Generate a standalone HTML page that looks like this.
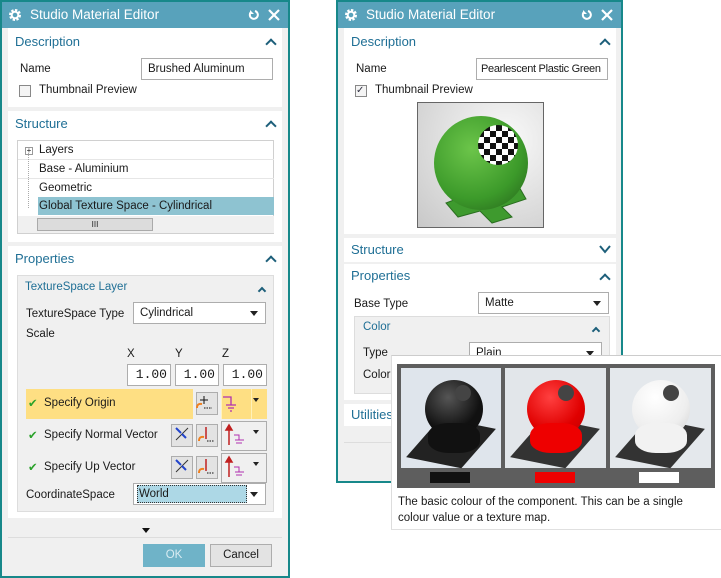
<!DOCTYPE html>
<html><head><meta charset="utf-8"><style>
*{box-sizing:border-box;margin:0;padding:0}
body{width:721px;height:578px;background:#fff;position:relative;overflow:hidden;font-family:"Liberation Sans","DejaVu Sans",sans-serif;font-size:11.5px;color:#1a1a1a}
.a{position:absolute}
.win{position:absolute;background:#f0f0f0;border:2px solid #17888a}
.title{position:absolute;left:0;top:0;right:0;height:26px;background:#58a2bb;color:#fff;font-size:13.5px;line-height:26px;padding-left:28px}
.sec{position:absolute;background:#fff}
.h{position:absolute;color:#1f6f95;font-size:13px}
.car{position:absolute;width:8px;height:8px;border-left:2px solid #1d5f7a;border-top:2px solid #1d5f7a;transform:rotate(45deg)}
.inp{position:absolute;background:#fff;border:1px solid #adadad;padding-left:6px;line-height:20px;height:22px}
.dd:after{content:"";position:absolute;right:7px;top:8px;border:4px solid transparent;border-top:5px solid #222;border-bottom:0}
.btn{position:absolute;background:#e3e3e3;border:1px solid #adadad}
.num{font-family:'Liberation Mono',monospace;font-size:13px;text-align:right;padding-right:3px}
</style></head><body>

<!-- LEFT WINDOW -->
<div class="win" style="left:0;top:0;width:290px;height:578px">
 <div class="title">Studio Material Editor
  <svg class="a" style="left:6px;top:6px" width="14" height="14" viewBox="0 0 14 14"><circle cx="7" cy="7" r="4.5" fill="none" stroke="#fff" stroke-width="3" stroke-dasharray="2.2 1.3"/><circle cx="7" cy="7" r="3.3" fill="none" stroke="#fff" stroke-width="2"/></svg>
  <svg class="a" style="left:246px;top:7px" width="12" height="12" viewBox="0 0 12 12"><path d="M3 3A4 4 0 1 0 7 2" fill="none" stroke="#fff" stroke-width="2"/><path d="M2 1v4h4" fill="#fff"/></svg>
  <svg class="a" style="left:266px;top:7px" width="12" height="12" viewBox="0 0 12 12"><path d="M1 1L11 11M11 1L1 11" stroke="#fff" stroke-width="2.2"/></svg>
 </div>
 <div class="sec" style="left:6px;top:26px;width:274px;height:79px">
  <div class="h" style="left:7px;top:6px">Description</div><div class="car" style="left:259px;top:12px"></div>
  <div class="a" style="left:12px;top:35px">Name</div>
  <div class="inp" style="left:133px;top:30px;width:132px">Brushed Aluminum</div>
  <div class="a" style="left:11px;top:57px;width:12px;height:12px;border:1px solid #888;background:#f4f4f4"></div>
  <div class="a" style="left:31px;top:56px">Thumbnail Preview</div>
 </div>
 <div class="sec" style="left:6px;top:109px;width:274px;height:131px">
  <div class="h" style="left:7px;top:5px">Structure</div><div class="car" style="left:259px;top:11px"></div>
  <div class="a" style="left:9px;top:29px;width:257px;height:94px;border:1px solid #d0d0d0;background:#fff">
   <div class="a" style="left:7px;top:6px;width:8px;height:8px;border:1px solid #999;font-size:8px;line-height:6px;text-align:center">+</div>
   <div class="a" style="left:21px;top:3px">Layers</div>
   <div class="a" style="left:0;top:18px;width:256px;border-top:1px solid #e6e6e6"></div>
   <div class="a" style="left:21px;top:22px">Base - Aluminium</div>
   <div class="a" style="left:0;top:37px;width:256px;border-top:1px solid #e6e6e6"></div>
   <div class="a" style="left:21px;top:41px">Geometric</div>
   <div class="a" style="left:20px;top:56px;width:236px;height:18px;background:#8ec3d1"></div>
   <div class="a" style="left:21px;top:59px">Global Texture Space - Cylindrical</div>
   <div class="a" style="left:10px;top:12px;height:55px;border-left:1px dotted #aaa"></div>
   <div class="a" style="left:0;top:75px;width:256px;height:17px;background:#f0f0f0"></div>
   <div class="a" style="left:19px;top:77px;width:116px;height:13px;background:#dcdcdc;border:1px solid #aaa;font-size:8px;text-align:center;line-height:11px">III</div>
  </div>
 </div>
 <div class="sec" style="left:6px;top:244px;width:274px;height:272px">
  <div class="h" style="left:7px;top:5px">Properties</div><div class="car" style="left:259px;top:11px"></div>
  <div class="a" style="left:9px;top:29px;width:257px;height:237px;background:#f0f0f0;border:1px solid #ddd">
   <div class="h" style="left:7px;top:5px;font-size:11.5px">TextureSpace Layer</div><div class="car" style="left:241px;top:12px;width:6px;height:6px"></div>
   <div class="a" style="left:8px;top:32px">TextureSpace Type</div>
   <div class="inp dd" style="left:115px;top:26px;width:133px">Cylindrical</div>
   <div class="a" style="left:8px;top:52px">Scale</div>
   <div class="a" style="left:109px;top:72px">X</div><div class="a" style="left:157px;top:72px">Y</div><div class="a" style="left:204px;top:72px">Z</div>
   <div class="inp num" style="left:109px;top:88px;width:44px">1.00</div>
   <div class="inp num" style="left:157px;top:88px;width:44px">1.00</div>
   <div class="inp num" style="left:205px;top:88px;width:44px">1.00</div>
   <div class="a" style="left:8px;top:113px;width:167px;height:30px;background:#fedf83"></div>
   <div class="a" style="left:203px;top:113px;width:46px;height:30px;background:#fedf83;border-left:1px solid #fff3c0"></div>
   <div class="a" style="left:233px;top:113px;width:1px;height:30px;background:#fff1b8"></div>
   <div class="a" style="left:10px;top:120px;color:#2aa22a;font-weight:bold">✔</div><div class="a" style="left:26px;top:121px">Specify Origin</div>
   <div class="btn" style="left:178px;top:116px;width:22px;height:23px"></div>
   <div class="a" style="left:10px;top:152px;color:#2aa22a;font-weight:bold">✔</div><div class="a" style="left:26px;top:153px">Specify Normal Vector</div>
   <div class="btn" style="left:153px;top:148px;width:22px;height:23px"></div><div class="btn" style="left:178px;top:148px;width:22px;height:23px"></div>
   <div class="btn" style="left:203px;top:145px;width:46px;height:30px;background:#f0f0f0"></div>
   <div class="a" style="left:10px;top:184px;color:#2aa22a;font-weight:bold">✔</div><div class="a" style="left:26px;top:185px">Specify Up Vector</div>
   <div class="btn" style="left:153px;top:180px;width:22px;height:23px"></div><div class="btn" style="left:178px;top:180px;width:22px;height:23px"></div>
   <div class="btn" style="left:203px;top:177px;width:46px;height:30px;background:#f0f0f0"></div>
   <div class="a" style="left:8px;top:213px">CoordinateSpace</div>
   <div class="inp dd" style="left:115px;top:207px;width:133px;padding-left:3px"><span style="display:inline-block;background:#add8e6;width:110px;line-height:16px;border:1px dotted #333;padding-left:1px">World</span></div>
  </div>
 </div>
 <div class="a" style="left:140px;top:526px;border:4px solid transparent;border-top:5px solid #111"></div>
 <div class="a" style="left:6px;top:535px;width:274px;border-top:1px solid #ddd"></div>
 <div class="a" style="left:141px;top:542px;width:62px;height:23px;background:#6fb3c8;color:#d9ecf2;text-align:center;line-height:23px">OK</div>
 <div class="btn" style="left:208px;top:542px;width:62px;height:23px;text-align:center;line-height:21px">Cancel</div>
</div>
<!-- left icons -->
<svg class="a" style="left:194px;top:392px" width="22" height="20"><path d="M10 4v8M6 8h8" stroke="#111"/><path d="M3 16q0-5 5-4" stroke="#f08020" stroke-width="2" fill="none"/><path d="M10 16h8" stroke="#111" stroke-dasharray="1.5 1"/></svg>
<svg class="a" style="left:220px;top:392px" width="20" height="20"><path d="M3 5h8v8M6 13h10M8 16h6M10 19h2" stroke="#b030b0" stroke-width="1.3" fill="none"/></svg>
<svg class="a" style="left:172px;top:424px" width="20" height="20"><path d="M4 16L16 4" stroke="#333"/><path d="M4 4l5 5M10 10l4 4" stroke="#2244cc" stroke-width="2"/></svg>
<svg class="a" style="left:172px;top:456px" width="20" height="20"><path d="M4 16L16 4" stroke="#333"/><path d="M4 4l5 5M10 10l4 4" stroke="#2244cc" stroke-width="2"/></svg>
<svg class="a" style="left:196px;top:424px" width="20" height="20"><path d="M10 3v12" stroke="#c02020" stroke-width="1.5"/><path d="M3 17q0-5 5-4" stroke="#f08020" stroke-width="2" fill="none"/><path d="M11 17h7" stroke="#111" stroke-dasharray="1.5 1"/></svg>
<svg class="a" style="left:196px;top:456px" width="20" height="20"><path d="M10 3v12" stroke="#c02020" stroke-width="1.5"/><path d="M3 17q0-5 5-4" stroke="#f08020" stroke-width="2" fill="none"/><path d="M11 17h7" stroke="#111" stroke-dasharray="1.5 1"/></svg>
<svg class="a" style="left:222px;top:422px" width="24" height="26"><path d="M7 3l-3 5h6zM7 7v16" stroke="#c02020" fill="#c02020" stroke-width="1.5"/><path d="M12 13h5v5M13 18h9M14 21h6" stroke="#b030b0" fill="none"/></svg>
<svg class="a" style="left:222px;top:454px" width="24" height="26"><path d="M7 3l-3 5h6zM7 7v16" stroke="#c02020" fill="#c02020" stroke-width="1.5"/><path d="M12 13h5v5M13 18h9M14 21h6" stroke="#b030b0" fill="none"/></svg>
<div class="a" style="left:253px;top:398px;border:3px solid transparent;border-top:4px solid #222"></div>
<div class="a" style="left:253px;top:430px;border:3px solid transparent;border-top:4px solid #222"></div>
<div class="a" style="left:253px;top:462px;border:3px solid transparent;border-top:4px solid #222"></div>

<!-- RIGHT WINDOW -->
<div class="win" style="left:336px;top:0;width:287px;height:483px">
 <div class="title">Studio Material Editor
  <svg class="a" style="left:6px;top:6px" width="14" height="14" viewBox="0 0 14 14"><circle cx="7" cy="7" r="4.5" fill="none" stroke="#fff" stroke-width="3" stroke-dasharray="2.2 1.3"/><circle cx="7" cy="7" r="3.3" fill="none" stroke="#fff" stroke-width="2"/></svg>
  <svg class="a" style="left:243px;top:7px" width="12" height="12" viewBox="0 0 12 12"><path d="M3 3A4 4 0 1 0 7 2" fill="none" stroke="#fff" stroke-width="2"/><path d="M2 1v4h4" fill="#fff"/></svg>
  <svg class="a" style="left:263px;top:7px" width="12" height="12" viewBox="0 0 12 12"><path d="M1 1L11 11M11 1L1 11" stroke="#fff" stroke-width="2.2"/></svg>
 </div>
 <div class="sec" style="left:6px;top:26px;width:272px;height:206px">
  <div class="h" style="left:7px;top:6px">Description</div><div class="car" style="left:257px;top:12px"></div>
  <div class="a" style="left:12px;top:35px">Name</div>
  <div class="inp" style="left:132px;top:30px;width:132px;padding-left:4px;white-space:nowrap;overflow:hidden;letter-spacing:-0.3px;font-size:11px">Pearlescent Plastic Green</div>
  <div class="a" style="left:11px;top:57px;width:12px;height:12px;border:1px solid #888;background:#f4f4f4;font-size:10px;line-height:10px;color:#334">✓</div>
  <div class="a" style="left:31px;top:56px">Thumbnail Preview</div>
  <div class="a" style="left:73px;top:74px;width:127px;height:126px;border:1px solid #666;background:radial-gradient(circle at 70% 30%,#fafafa,#c8c8c8);overflow:hidden">
   <svg class="a" style="left:0;top:0" width="125" height="124"><path d="M30 88l30-12 40 6 8 14-24 8 10 10-20 6-12-12-22 6-12-14 16-6z" fill="#3e9a2e" stroke="#2a6e20"/></svg>
   <div class="a" style="left:16px;top:13px;width:94px;height:94px;border-radius:50%;background:radial-gradient(circle at 40% 35%,#6cc54a,#3c9a2a 60%,#245e1a)"></div>
   <div class="a" style="left:60px;top:22px;width:40px;height:40px;border-radius:50%;overflow:hidden;background:repeating-conic-gradient(#111 0 25%,#fff 0 50%) 0 0/12px 12px"></div>
  </div>
 </div>
 <div class="sec" style="left:6px;top:236px;width:272px;height:24px">
  <div class="h" style="left:7px;top:4px">Structure</div>
  <svg class="a" style="left:255px;top:7px" width="12" height="9"><path d="M1 1l5 6 5-6" stroke="#1d5f7a" stroke-width="2" fill="none"/></svg>
 </div>
 <div class="sec" style="left:6px;top:262px;width:272px;height:136px">
  <div class="h" style="left:7px;top:4px">Properties</div><div class="car" style="left:257px;top:11px"></div>
  <div class="a" style="left:10px;top:34px">Base Type</div>
  <div class="inp dd" style="left:134px;top:28px;width:131px">Matte</div>
  <div class="a" style="left:10px;top:52px;width:256px;height:78px;background:#f0f0f0;border:1px solid #ddd">
   <div class="h" style="left:8px;top:4px;font-size:11.5px">Color</div><div class="car" style="left:238px;top:11px;width:6px;height:6px"></div>
   <div class="a" style="left:8px;top:30px">Type</div>
   <div class="inp dd" style="left:114px;top:25px;width:133px">Plain</div>
   <div class="a" style="left:8px;top:52px">Color</div>
  </div>
 </div>
 <div class="sec" style="left:6px;top:402px;width:272px;height:22px">
  <div class="h" style="left:7px;top:3px">Utilities</div>
 </div>
 <div class="a" style="left:6px;top:440px;width:272px;border-top:1px solid #ddd"></div>
</div>

<!-- TOOLTIP -->
<div class="a" style="left:391px;top:355px;width:330px;height:175px;background:#fff;border-top:1px solid #ccc;border-left:1px solid #ddd;border-bottom:1px solid #e0e0e0">
 <div class="a" style="left:5px;top:8px;width:318px;height:124px;background:#5e5e5e">
  <div class="a" style="left:4px;top:4px;width:100px;height:100px;background:#dfe5ec">
   <div class="a" style="left:18px;top:55px;width:64px;height:40px;background:#222;transform:skewX(-35deg) rotate(10deg)"></div>
   <div class="a" style="left:24px;top:12px;width:58px;height:58px;border-radius:50%;background:radial-gradient(circle at 40% 30%,#555,#111 60%)"></div>
   <div class="a" style="left:27px;top:55px;width:52px;height:30px;border-radius:40%;background:#111"></div>
   <div class="a" style="left:54px;top:17px;width:16px;height:16px;border-radius:50%;background:#444"></div>
  </div>
  <div class="a" style="left:108px;top:4px;width:101px;height:100px;background:#e2e6ea">
   <div class="a" style="left:18px;top:55px;width:64px;height:40px;background:#333;transform:skewX(-35deg) rotate(10deg)"></div>
   <div class="a" style="left:22px;top:12px;width:58px;height:58px;border-radius:50%;background:radial-gradient(circle at 40% 30%,#ff4040,#e00000 60%,#b00)"></div>
   <div class="a" style="left:25px;top:55px;width:52px;height:30px;border-radius:40%;background:#e00"></div>
   <div class="a" style="left:53px;top:17px;width:16px;height:16px;border-radius:50%;background:#444"></div>
  </div>
  <div class="a" style="left:213px;top:4px;width:101px;height:100px;background:#e4e8ec">
   <div class="a" style="left:18px;top:55px;width:64px;height:40px;background:#333;transform:skewX(-35deg) rotate(10deg)"></div>
   <div class="a" style="left:22px;top:12px;width:58px;height:58px;border-radius:50%;background:radial-gradient(circle at 40% 30%,#fff,#eee 60%,#ccc)"></div>
   <div class="a" style="left:25px;top:55px;width:52px;height:30px;border-radius:40%;background:#f2f2f2"></div>
   <div class="a" style="left:53px;top:17px;width:16px;height:16px;border-radius:50%;background:#444"></div>
  </div>
  <div class="a" style="left:33px;top:108px;width:40px;height:11px;background:#111"></div>
  <div class="a" style="left:138px;top:108px;width:40px;height:11px;background:#ee0000"></div>
  <div class="a" style="left:242px;top:108px;width:40px;height:11px;background:#fff"></div>
 </div>
 <div class="a" style="left:6px;top:138px;line-height:16px;width:305px">The basic colour of the component. This can be a single colour value or a texture map.</div>
</div>
</body></html>
